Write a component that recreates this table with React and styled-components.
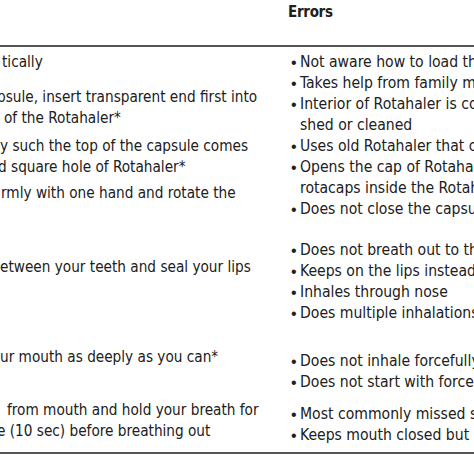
import React from 'react';
import styled, { createGlobalStyle } from 'styled-components';

const Global = createGlobalStyle`
  html, body { margin: 0; padding: 0; background: #ffffff; overflow: hidden; }
  body {
    font-family: "DejaVu Sans Condensed", "DejaVu Sans", "Liberation Sans", sans-serif;
    font-stretch: condensed;
    color: #202020;
  }
`;

const Page = styled.div`
  width: 474px;
  height: 474px;
  overflow: hidden;
`;

const Header = styled.div`
  display: grid;
  grid-template-columns: 288px 1fr;
  height: 47px;
  box-sizing: border-box;
  padding-top: 2px;
  border-bottom: 2px solid #555555;
`;

const HeadCell = styled.div`
  font-weight: 700;
  font-size: 15px;
  line-height: 20px;
  letter-spacing: -0.3px;
  white-space: nowrap;
`;

const Body = styled.div`
  display: grid;
  grid-template-columns: 291px 1fr;
  padding: 5px 0 6px;
  border-bottom: 2px solid #555555;
`;

const Column = styled.div`
  display: flex;
  flex-direction: column;
  overflow: hidden;
  min-width: 0;
`;

const StepLine = styled.div`
  font-size: 15.2px;
  line-height: 21px;
  white-space: nowrap;
  margin-top: ${(p) => p.$gap || 0}px;
  margin-left: ${(p) => p.$indent || 0}px;
`;

const Item = styled.div`
  display: flex;
  font-size: 15.6px;
  line-height: 21px;
  white-space: nowrap;
  margin-top: ${(p) => p.$gap || 0}px;
`;

const Bullet = styled.span`
  flex: 0 0 9px;
  width: 9px;
  font-family: "Liberation Sans", Arial, sans-serif;
  font-size: 16px;
`;

const ItemText = styled.span`
  display: block;
`;

const steps = [
  { text: 'tically', gap: 0, indent: 2 },
  { text: 'psule, insert transparent end first into', gap: 14, indent: -3 },
  { text: 'of the Rotahaler*', gap: 0, indent: 4 },
  { text: 'y such the top of the capsule comes', gap: 7, indent: 0 },
  { text: 'd square hole of Rotahaler*', gap: 0, indent: -2 },
  { text: 'rmly with one hand and rotate the', gap: 5, indent: 1 },
  { text: 'etween your teeth and seal your lips', gap: 53, indent: 0 },
  { text: 'ur mouth as deeply as you can*', gap: 69, indent: 0 },
  { text: 'from mouth and hold your breath for', gap: 32, indent: 7 },
  { text: 'e (10 sec) before breathing out', gap: 0, indent: -3 },
];

const errors = [
  { lines: ['Not aware how to load the capsule'], gap: 0 },
  { lines: ['Takes help from family members'], gap: 0 },
  { lines: ['Interior of Rotahaler is contaminated, not wa', 'shed or cleaned'], gap: 0 },
  { lines: ['Uses old Rotahaler that cannot rotate'], gap: 0 },
  { lines: ['Opens the cap of Rotahaler and keeps the', 'rotacaps inside the Rotahaler'], gap: 0 },
  { lines: ['Does not close the capsule'], gap: 0 },
  { lines: ['Does not breath out to the fullest'], gap: 20 },
  { lines: ['Keeps on the lips instead of teeth'], gap: 0 },
  { lines: ['Inhales through nose'], gap: 0 },
  { lines: ['Does multiple inhalations'], gap: 0 },
  { lines: ['Does not inhale forcefully'], gap: 27 },
  { lines: ['Does not start with forceful inhalation'], gap: 0 },
  { lines: ['Most commonly missed step'], gap: 11 },
  { lines: ['Keeps mouth closed but breathes out'], gap: 0 },
];

export default function App() {
  return (
    <Page>
      <Global />
      <Header>
        <HeadCell />
        <HeadCell>Errors</HeadCell>
      </Header>
      <Body>
        <Column>
          {steps.map((s, i) => (
            <StepLine key={i} $gap={s.gap} $indent={s.indent}>
              {s.text}
            </StepLine>
          ))}
        </Column>
        <Column>
          {errors.map((e, i) => (
            <Item key={i} $gap={e.gap}>
              <Bullet>•</Bullet>
              <ItemText>
                {e.lines.map((l, j) => (
                  <React.Fragment key={j}>
                    {j > 0 && <br />}
                    {l}
                  </React.Fragment>
                ))}
              </ItemText>
            </Item>
          ))}
        </Column>
      </Body>
    </Page>
  );
}
